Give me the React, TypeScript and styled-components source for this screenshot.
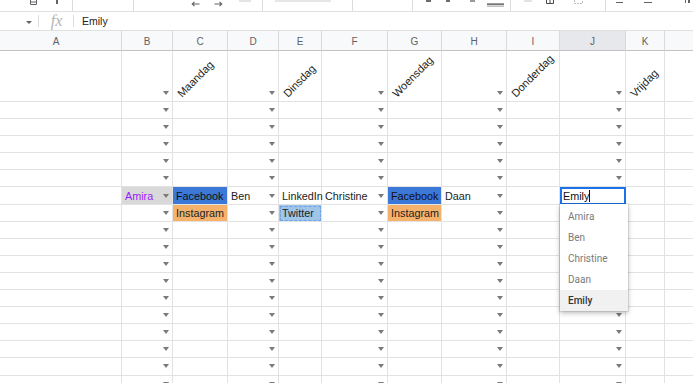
import React from 'react';
import styled, { createGlobalStyle, css } from 'styled-components';

const GlobalStyle = createGlobalStyle`
  html, body { margin: 0; padding: 0; background: #fff; }
  body { font-family: "Liberation Sans", Arial, sans-serif; overflow: hidden; }
  * { box-sizing: border-box; }
`;

const COLS = [131, 51, 55, 51, 43, 66, 54, 65, 53, 66, 39, 40];
const LETTERS = ['A', 'B', 'C', 'D', 'E', 'F', 'G', 'H', 'I', 'J', 'K', ''];
const COL_TEMPLATE = COLS.map((w) => `${w}px`).join(' ');
const ARROW_COLS = new Set([1, 3, 5, 7, 9]);
const DAYS: Record<number, string> = { 2: 'Maandag', 4: 'Dinsdag', 6: 'Woensdag', 8: 'Donderdag', 10: 'Vrijdag' };
const ROW_COUNT = 17;

type Kind = 'plain' | 'amira' | 'facebook' | 'instagram' | 'twitter' | 'editor';
type CellData = { text: string; kind: Kind };

const DATA: Record<number, Record<number, CellData>> = {
  6: {
    1: { text: 'Amira', kind: 'amira' },
    2: { text: 'Facebook', kind: 'facebook' },
    3: { text: 'Ben', kind: 'plain' },
    4: { text: 'LinkedIn', kind: 'plain' },
    5: { text: 'Christine', kind: 'plain' },
    6: { text: 'Facebook', kind: 'facebook' },
    7: { text: 'Daan', kind: 'plain' },
    9: { text: 'Emily', kind: 'editor' },
  },
  7: {
    2: { text: 'Instagram', kind: 'instagram' },
    4: { text: 'Twitter', kind: 'twitter' },
    6: { text: 'Instagram', kind: 'instagram' },
  },
};

const OPTIONS = ['Amira', 'Ben', 'Christine', 'Daan', 'Emily'];

/* ---------- page ---------- */
const Page = styled.div`
  width: 693px;
  height: 383px;
  overflow: hidden;
  display: flex;
  flex-direction: column;
  background: #fff;
`;

/* ---------- toolbar (cut off at the top) ---------- */
const Toolbar = styled.div`
  height: 12px;
  flex: none;
  border-bottom: 1px solid #e0e0e0;
  display: flex;
  align-items: flex-start;
  overflow: hidden;
`;
const Gap = styled.div<{ $w: number }>`
  flex: none;
  width: ${(p) => p.$w}px;
`;
const Sep = styled.div`
  flex: none;
  width: 1px;
  height: 11px;
  background: #dadce0;
`;
const Bit = styled.div<{ $w: number; $h: number; $top?: number; $c?: string }>`
  flex: none;
  width: ${(p) => p.$w}px;
  height: ${(p) => p.$h}px;
  margin-top: ${(p) => p.$top ?? 0}px;
  background: ${(p) => p.$c ?? '#5f6368'};
`;
const Glyph = styled.svg`
  flex: none;
  display: block;
`;

/* ---------- formula bar ---------- */
const FormulaBar = styled.div`
  height: 19px;
  flex: none;
  border-bottom: 1px solid #e0e0e0;
  display: flex;
  align-items: center;
`;
const NameBox = styled.div`
  width: 38px;
  display: flex;
  justify-content: flex-end;
  padding-right: 6px;
`;
const SmallCaret = styled.span`
  width: 0;
  height: 0;
  border-left: 3px solid transparent;
  border-right: 3px solid transparent;
  border-top: 3px solid #5f6368;
  margin-top: 2px;
`;
const BarDivider = styled.div`
  width: 1px;
  height: 12px;
  background: #dadce0;
`;
const FxBox = styled.div`
  width: 34px;
  text-align: center;
  font-family: "Liberation Serif", "Times New Roman", serif;
  font-style: italic;
  font-size: 16px;
  line-height: 18px;
  color: #b4b4b4;
  padding-left: 1px;
`;
const FormulaText = styled.div`
  padding-left: 8px;
  font-size: 10.5px;
  color: #222;
`;

/* ---------- sheet ---------- */
const SheetArea = styled.div`
  margin-left: -9px;
  display: flex;
  flex-direction: column;
`;
const HeaderRow = styled.div`
  display: grid;
  grid-template-columns: ${COL_TEMPLATE};
  height: 20px;
`;
const HeaderCell = styled.div<{ $active?: boolean }>`
  background: ${(p) => (p.$active ? '#e6e8eb' : '#f8f9fa')};
  border-right: 1px solid #d9d9d9;
  border-bottom: 1px solid #c2c2c2;
  display: flex;
  align-items: center;
  justify-content: center;
  font-size: 10px;
  color: #5f6368;
  padding-top: 1px;
`;

const Body = styled.div`
  position: relative;
  display: grid;
  grid-template-columns: ${COL_TEMPLATE};
  grid-template-rows: 51px;
  grid-auto-rows: 17.1px;
`;

const kindStyles: Record<Kind, ReturnType<typeof css>> = {
  plain: css`
    overflow: visible;
  `,
  amira: css`
    background: #d9d9d9;
    color: #9a1cff;
  `,
  facebook: css`
    background: #3c78d8;
    color: #111;
  `,
  instagram: css`
    background: #f6b26b;
    color: #222;
  `,
  twitter: css`
    background: #9fc5e8;
    color: #222;
    outline: 1px dashed rgba(74, 134, 232, 0.55);
    outline-offset: -2px;
  `,
  editor: css`
    border: 2px solid #1a73e8;
    padding-left: 1px;
    background: #fff;
    color: #111;
  `,
};

const Cell = styled.div<{ $kind?: Kind; $arrow?: boolean }>`
  min-width: 0;
  border-right: 1px solid #e2e2e2;
  border-bottom: 1px solid #e2e2e2;
  display: flex;
  align-items: center;
  padding: 0 ${(p) => (p.$arrow ? 3 : 0)}px 0 3px;
  overflow: hidden;
  white-space: nowrap;
  font-size: 10.8px;
  color: #222;
  ${(p) => kindStyles[p.$kind ?? 'plain']}
`;

const TallCell = styled.div<{ $label?: boolean }>`
  min-width: 0;
  border-right: 1px solid #e2e2e2;
  border-bottom: 1px solid #e2e2e2;
  display: flex;
  align-items: flex-end;
  padding: ${(p) => (p.$label ? '0 0 1px 11px' : '0 3px 6px 3px')};
  overflow: visible;
`;

const DayLabel = styled.span`
  display: block;
  font-size: 11px;
  line-height: 13px;
  color: #222;
  white-space: nowrap;
  transform-origin: 0 100%;
  transform: rotate(-45deg);
`;

const CellText = styled.span`
  flex: 0 1 auto;
`;

const Arrow = styled.span`
  flex: none;
  margin-left: auto;
  width: 0;
  height: 0;
  border-left: 3.5px solid transparent;
  border-right: 3.5px solid transparent;
  border-top: 4px solid #7a7a7a;
`;

const Caret = styled.span`
  display: inline-block;
  width: 1px;
  height: 12px;
  background: #111;
  vertical-align: -2px;
`;

/* ---------- dropdown popup ---------- */
const Popup = styled.div`
  position: absolute;
  left: 569px;
  top: 153px;
  width: 68px;
  padding-top: 2px;
  background: #fff;
  box-shadow: 0 2px 5px rgba(0, 0, 0, 0.28), 0 0 0 1px rgba(0, 0, 0, 0.08);
  z-index: 5;
`;
const Option = styled.div<{ $current?: boolean }>`
  height: 21px;
  display: flex;
  align-items: center;
  padding-left: 8px;
  font-family: Roboto, "Liberation Sans", Arial, sans-serif;
  font-size: 10px;
  color: ${(p) => (p.$current ? '#333' : '#7a7a7a')};
  font-weight: ${(p) => (p.$current ? 500 : 400)};
  background: ${(p) => (p.$current ? '#f1f1f1' : 'transparent')};
`;

function TopToolbar() {
  return (
    <Toolbar>
      <Gap $w={30} />
      <Glyph width="7" height="5" viewBox="0 0 7 5">
        <path d="M0.5 0 V4.5 H6.5 V0 M0.5 2 H6.5" fill="none" stroke="#5f6368" strokeWidth="1" />
      </Glyph>
      <Gap $w={19} />
      <Bit $w={1.5} $h={4} />
      <Gap $w={14.5} />
      <Sep />
      <Gap $w={60} />
      <Sep />
      <Gap $w={57} />
      <Glyph width="9" height="7" viewBox="0 0 9 7">
        <path d="M8.5 4 H1.2 M3.5 1.8 L1.2 4 L3.5 6.2" fill="none" stroke="#5f6368" strokeWidth="1.1" />
      </Glyph>
      <Gap $w={14} />
      <Glyph width="9" height="7" viewBox="0 0 9 7">
        <path d="M0.5 4 H7.8 M5.5 1.8 L7.8 4 L5.5 6.2" fill="none" stroke="#5f6368" strokeWidth="1.1" />
      </Glyph>
      <Gap $w={16} />
      <Bit $w={12} $h={1.5} $c="#e4e4e4" />
      <Gap $w={11} />
      <Sep />
      <Gap $w={12} />
      <Bit $w={56} $h={1.5} $c="#e6e6e6" />
      <Gap $w={21} />
      <Sep />
      <Gap $w={59} />
      <Sep />
      <Gap $w={13} />
      <Bit $w={5} $h={2} $c="#6b6b6b" />
      <Gap $w={15} />
      <Bit $w={4} $h={2} $c="#6b6b6b" />
      <Gap $w={20} />
      <Bit $w={5} $h={2} $c="#9a9a9a" />
      <Gap $w={12} />
      <Glyph width="17" height="7" viewBox="0 0 17 7">
        <rect x="0" y="3.5" width="17" height="1.2" fill="#3c3c3c" />
        <rect x="0" y="5.6" width="17" height="1" fill="#9a9a9a" />
      </Glyph>
      <Gap $w={6} />
      <Sep />
      <Gap $w={13} />
      <Bit $w={8} $h={1.5} $c="#e2e2e2" />
      <Gap $w={14} />
      <Glyph width="8" height="4" viewBox="0 0 8 4">
        <path d="M0.5 0 V3.5 H7.5 V0 M4 0 V3.5" fill="none" stroke="#4a4a4a" strokeWidth="1" />
      </Glyph>
      <Gap $w={20} />
      <Glyph width="9" height="4" viewBox="0 0 9 4">
        <path d="M0.5 0 V3.5 H8.5 V0" fill="none" stroke="#bdbdbd" strokeWidth="1" strokeDasharray="2 1" />
      </Glyph>
      <Gap $w={22} />
      <Sep />
      <Gap $w={10} />
      <Bit $w={7} $h={1.3} $top={2} $c="#5f6368" />
      <Gap $w={21} />
      <Bit $w={8} $h={1.3} $top={2} $c="#5f6368" />
      <Gap $w={33} />
      <Bit $w={1.3} $h={3} $c="#5f6368" />
      <Gap $w={2} />
      <Bit $w={1.3} $h={3} $c="#5f6368" />
    </Toolbar>
  );
}

function Formula() {
  return (
    <FormulaBar>
      <NameBox>
        <SmallCaret />
      </NameBox>
      <BarDivider />
      <FxBox>fx</FxBox>
      <BarDivider />
      <FormulaText>Emily</FormulaText>
    </FormulaBar>
  );
}

function renderCell(row: number, col: number) {
  const key = `${row}-${col}`;
  if (row === 0) {
    const day = DAYS[col];
    if (day) {
      return (
        <TallCell key={key} $label>
          <DayLabel>{day}</DayLabel>
        </TallCell>
      );
    }
    return <TallCell key={key}>{ARROW_COLS.has(col) && <Arrow />}</TallCell>;
  }
  const data = DATA[row]?.[col];
  if (data?.kind === 'editor') {
    return (
      <Cell key={key} $kind="editor">
        <CellText>
          {data.text}
          <Caret />
        </CellText>
      </Cell>
    );
  }
  const arrow = ARROW_COLS.has(col);
  return (
    <Cell key={key} $kind={data?.kind} $arrow={arrow}>
      {data && <CellText>{data.text}</CellText>}
      {arrow && <Arrow />}
    </Cell>
  );
}

export default function App() {
  const rows = Array.from({ length: ROW_COUNT + 1 }, (_, r) => r);
  return (
    <>
      <GlobalStyle />
      <Page>
        <TopToolbar />
        <Formula />
        <SheetArea>
          <HeaderRow>
            {LETTERS.map((l, i) => (
              <HeaderCell key={i} $active={l === 'J'}>
                {l}
              </HeaderCell>
            ))}
          </HeaderRow>
          <Body>
            {rows.map((r) => COLS.map((_, c) => renderCell(r, c)))}
            <Popup>
              {OPTIONS.map((o) => (
                <Option key={o} $current={o === 'Emily'}>
                  {o}
                </Option>
              ))}
            </Popup>
          </Body>
        </SheetArea>
      </Page>
    </>
  );
}
